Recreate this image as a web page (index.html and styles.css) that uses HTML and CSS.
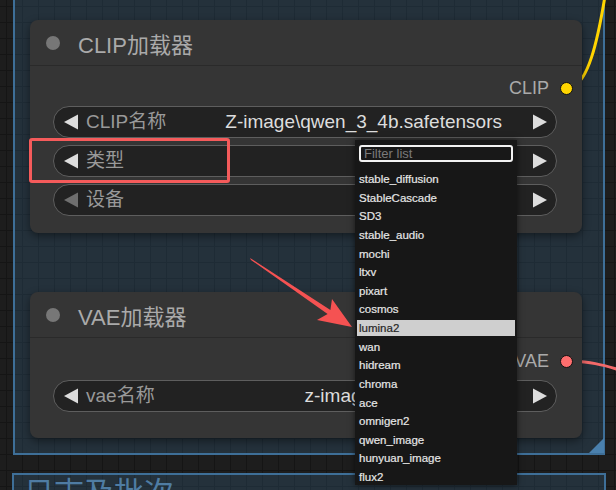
FILE: index.html
```html
<!DOCTYPE html>
<html lang="zh-CN">
<head>
    <meta charset="UTF-8">
    <title>CLIP加载器</title>
    <link rel="stylesheet" href="styles.css">
</head>
<body>
    <div class="canvas">
        <svg class="links" width="616" height="490" viewBox="0 0 616 490">
            <path d="M572 88 C588 80 597 45 605 -4" stroke="#ffd400" stroke-width="3" fill="none"/>
            <path d="M572 361 C590 362 600 364 620 370" stroke="#f46a6a" stroke-width="3" fill="none"/>
            <polygon points="589,453 604,438 604,453" fill="#4a80ad"/>
        </svg>

        <div class="group">
            <div class="node node-clip">
                <div class="node-title"><span class="dot"></span>CLIP加载器</div>
                <div class="node-body">
                    <div class="output">CLIP<span class="slot slot-clip"></span></div>
                    <div class="widget">
                        <svg class="arrow" viewBox="0 0 16 16"><polygon points="15,0.5 15,15.5 1,8"/></svg>
                        <div class="widget-text">
                            <span class="label">CLIP名称</span>
                            <span class="value">Z-image\qwen_3_4b.safetensors</span>
                        </div>
                        <svg class="arrow" viewBox="0 0 16 16"><polygon points="1,0.5 1,15.5 15,8"/></svg>
                    </div>
                    <div class="widget">
                        <svg class="arrow" viewBox="0 0 16 16"><polygon points="15,0.5 15,15.5 1,8"/></svg>
                        <div class="widget-text">
                            <span class="label">类型</span>
                            <span class="value">lumina2</span>
                        </div>
                        <svg class="arrow" viewBox="0 0 16 16"><polygon points="1,0.5 1,15.5 15,8"/></svg>
                    </div>
                    <div class="widget">
                        <svg class="arrow arrow-off" viewBox="0 0 16 16"><polygon points="15,0.5 15,15.5 1,8"/></svg>
                        <div class="widget-text">
                            <span class="label">设备</span>
                            <span class="value">default</span>
                        </div>
                        <svg class="arrow" viewBox="0 0 16 16"><polygon points="1,0.5 1,15.5 15,8"/></svg>
                    </div>
                </div>
            </div>

            <div class="node node-vae">
                <div class="node-title"><span class="dot"></span>VAE加载器</div>
                <div class="node-body">
                    <div class="output">VAE<span class="slot slot-vae"></span></div>
                    <div class="widget">
                        <svg class="arrow" viewBox="0 0 16 16"><polygon points="15,0.5 15,15.5 1,8"/></svg>
                        <div class="widget-text">
                            <span class="label">vae名称</span>
                            <span class="value">z-image\ae.safetensors</span>
                        </div>
                        <svg class="arrow" viewBox="0 0 16 16"><polygon points="1,0.5 1,15.5 15,8"/></svg>
                    </div>
                </div>
            </div>
        </div>

        <div class="group group-log">日志及批次</div>

        <!-- annotations -->
        <div class="mark-box"></div>
        <svg class="mark-arrow" width="616" height="490" viewBox="0 0 616 490">
            <polygon points="250,258 251,260 327.6,314.1 317,320 352,327 332,299 330.4,309.9" fill="#f55252"/>
        </svg>

        <div class="dropdown">
            <div class="filter">Filter list</div>
            <ul class="options">
                <li>stable_diffusion</li>
                <li>StableCascade</li>
                <li>SD3</li>
                <li>stable_audio</li>
                <li>mochi</li>
                <li>ltxv</li>
                <li>pixart</li>
                <li>cosmos</li>
                <li class="selected">lumina2</li>
                <li>wan</li>
                <li>hidream</li>
                <li>chroma</li>
                <li>ace</li>
                <li>omnigen2</li>
                <li>qwen_image</li>
                <li>hunyuan_image</li>
                <li>flux2</li>
            </ul>
        </div>
    </div>
</body>
</html>
```
FILE: styles.css
```css
* {
    margin: 0;
    padding: 0;
    box-sizing: border-box;
}

body {
    width: 616px;
    height: 490px;
    overflow: hidden;
    font-family: "Liberation Sans", "Noto Sans CJK SC", sans-serif;
    background-color: #1d1d1d;
}

.canvas {
    position: relative;
    width: 616px;
    height: 490px;
    overflow: hidden;
    background-color: #1d1d1d;
    background-image:
        linear-gradient(#151515 1px, transparent 1px),
        linear-gradient(90deg, #151515 1px, transparent 1px);
    background-size: 16px 16px;
    background-position: 6px 6px;
}

.links, .mark-arrow {
    position: absolute;
    top: 0;
    left: 0;
    pointer-events: none;
}

/* groups */
.group {
    margin-left: 13px;
    width: 592px;
    height: 455px;
    border: 2px solid #3e6f98;
    border-top: none;
    background-color: rgba(60, 110, 150, 0.25);
    padding: 20px 0 0 15px;
}

.group-log {
    margin-top: 18px;
    margin-left: 12px;
    width: 594px;
    height: 40px;
    border-top: 2px solid #3e6f98;
    padding: 3px 0 0 10px;
    font-size: 30px;
    line-height: 1;
    color: #4f7ca3;
}

/* nodes */
.node {
    position: relative;
    width: 552px;
    background-color: #353535;
    border-radius: 8px;
    box-shadow: 0 3px 8px rgba(0, 0, 0, 0.45);
}

.node-vae {
    margin-top: 59px;
}

.node-title {
    display: flex;
    align-items: center;
    height: 46px;
    padding-left: 16px;
    border-bottom: 1px solid #2a2a2a;
    font-size: 22px;
    color: #aaaaaa;
}

.dot {
    width: 14px;
    height: 14px;
    border-radius: 50%;
    background-color: #777777;
    margin-right: 18px;
}

.node-body {
    display: flex;
    flex-direction: column;
    gap: 7px;
    padding: 7px 25px 17px 23px;
}

.node-vae .node-body {
    padding-top: 8px;
    padding-bottom: 26px;
}

.output {
    display: flex;
    align-items: center;
    justify-content: flex-end;
    gap: 11px;
    height: 30px;
    margin-right: -16px;
    margin-bottom: -4px;
    font-size: 18px;
    color: #aaaaaa;
}

.node-vae .output {
    margin-bottom: -3px;
}

.slot {
    width: 13px;
    height: 13px;
    border-radius: 50%;
    border: 1.5px solid #111;
}

.slot-clip {
    background-color: #ffd500;
}

.slot-vae {
    background-color: #ff6e6e;
}

/* combo widgets */
.widget {
    display: flex;
    align-items: center;
    height: 32px;
    padding: 0 8px 0 9px;
    background-color: #222222;
    border: 1px solid #5e5e5e;
    border-radius: 16px;
    font-size: 19px;
}

.widget-text {
    flex: 1;
    display: flex;
    align-items: baseline;
    line-height: 22px;
    margin-top: -1px;
}

.arrow {
    width: 16px;
    height: 16px;
    flex-shrink: 0;
    fill: #dddddd;
}

.arrow-off {
    fill: #6f6f6f;
}

.label {
    margin-left: 7px;
    color: #999999;
    white-space: nowrap;
}

.value {
    flex: 1;
    text-align: right;
    margin-right: 30px;
    color: #dddddd;
    white-space: nowrap;
}

/* red annotation */
.mark-box {
    position: absolute;
    left: 29px;
    top: 138px;
    width: 201px;
    height: 45px;
    border: 3px solid #f55b5b;
    border-radius: 3px;
}

/* combo dropdown */
.dropdown {
    position: absolute;
    left: 355px;
    top: 140px;
    width: 162px;
    height: 345px;
    padding: 5px 4px 0 4px;
    background-color: #171717;
    box-shadow: 0 0 6px rgba(0, 0, 0, 0.6);
}

.filter {
    height: 17px;
    padding-left: 3px;
    border: 2px solid #f2f2f2;
    border-radius: 3px;
    background-color: #181818;
    font-size: 13px;
    line-height: 13px;
    color: #7a7a7a;
}

.options {
    list-style: none;
    margin: 9px -2px 0 -2px;
    display: flex;
    flex-direction: column;
    gap: 2.625px;
}

.options li {
    height: 16px;
    padding-left: 2px;
    font-size: 11.5px;
    line-height: 16px;
    color: #e6e6e6;
    -webkit-text-stroke: 0.2px #e6e6e6;
}

.options li.selected {
    background-color: #cfcfcf;
    color: #262626;
    -webkit-text-stroke: 0.2px #262626;
}
```
